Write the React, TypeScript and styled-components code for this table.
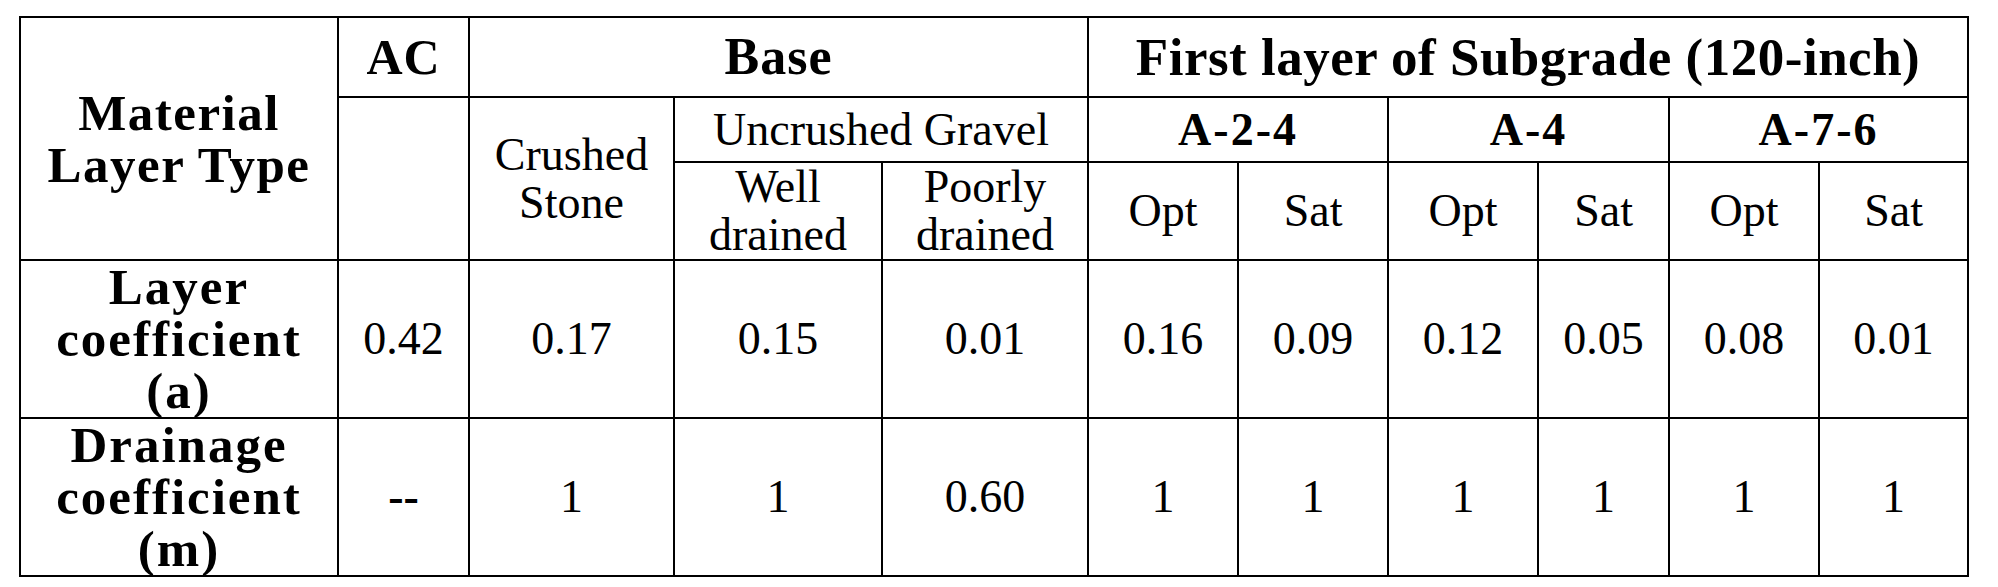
import styled, { createGlobalStyle } from "styled-components";

const GlobalStyle = createGlobalStyle`
  html, body {
    margin: 0;
    padding: 0;
    background: #fff;
  }
  body {
    padding: 16px 0 0 19px;
    font-family: "Liberation Serif", "Times New Roman", serif;
    color: #000;
  }
`;

const Table = styled.table`
  border-collapse: collapse;
  table-layout: fixed;
  width: 1950px;
  border: 2px solid #000;
`;

const Row = styled.tr<{ $h: number }>`
  height: ${(p) => p.$h}px;
`;

const Cell = styled.td<{ $bold?: boolean; $size?: number; $track?: number }>`
  border: 2px solid #000;
  padding: 0;
  text-align: center;
  vertical-align: middle;
  font-size: ${(p) => p.$size ?? 46}px;
  font-weight: ${(p) => (p.$bold ? 700 : 400)};
  line-height: ${(p) => (p.$bold ? 52 : 48)}px;
  letter-spacing: ${(p) => p.$track ?? 0}px;
`;

const HeadCell = styled(Cell).attrs({ as: "th" })``;

const colWidths = [318, 131, 205, 208, 206, 150, 150, 150, 131, 150, 149];

const layerCoef = ["0.42", "0.17", "0.15", "0.01", "0.16", "0.09", "0.12", "0.05", "0.08", "0.01"];
const drainCoef = ["--", "1", "1", "0.60", "1", "1", "1", "1", "1", "1"];

export default function App() {
  return (
    <>
      <GlobalStyle />
      <Table>
        <colgroup>
          {colWidths.map((w, i) => (
            <col key={i} style={{ width: w }} />
          ))}
        </colgroup>
        <thead>
          <Row $h={80}>
            <HeadCell rowSpan={3} $bold $size={51} $track={1.5}>
              Material
              <br />
              Layer Type
            </HeadCell>
            <HeadCell $bold $size={50} $track={1}>AC</HeadCell>
            <HeadCell colSpan={3} $bold $size={52} $track={1}>Base</HeadCell>
            <HeadCell colSpan={6} $bold $size={53} $track={0.5}>
              First layer of Subgrade (120-inch)
            </HeadCell>
          </Row>
          <Row $h={65}>
            <Cell rowSpan={2} />
            <Cell rowSpan={2}>
              Crushed
              <br />
              Stone
            </Cell>
            <Cell colSpan={2}>Uncrushed Gravel</Cell>
            <HeadCell colSpan={2} $bold $size={46} $track={2}>A-2-4</HeadCell>
            <HeadCell colSpan={2} $bold $size={46} $track={2}>A-4</HeadCell>
            <HeadCell colSpan={2} $bold $size={46} $track={2}>A-7-6</HeadCell>
          </Row>
          <Row $h={97}>
            <Cell>
              Well
              <br />
              drained
            </Cell>
            <Cell>
              Poorly
              <br />
              drained
            </Cell>
            {["Opt", "Sat", "Opt", "Sat", "Opt", "Sat"].map((t, i) => (
              <Cell key={i}>{t}</Cell>
            ))}
          </Row>
        </thead>
        <tbody>
          <Row $h={158}>
            <HeadCell $bold $size={51} $track={2}>
              Layer
              <br />
              coefficient
              <br />
              (a)
            </HeadCell>
            {layerCoef.map((v, i) => (
              <Cell key={i}>{v}</Cell>
            ))}
          </Row>
          <Row $h={158}>
            <HeadCell $bold $size={51} $track={2}>
              Drainage
              <br />
              coefficient
              <br />
              (m)
            </HeadCell>
            {drainCoef.map((v, i) => (
              <Cell key={i} $bold={v === "--"}>
                {v}
              </Cell>
            ))}
          </Row>
        </tbody>
      </Table>
    </>
  );
}
